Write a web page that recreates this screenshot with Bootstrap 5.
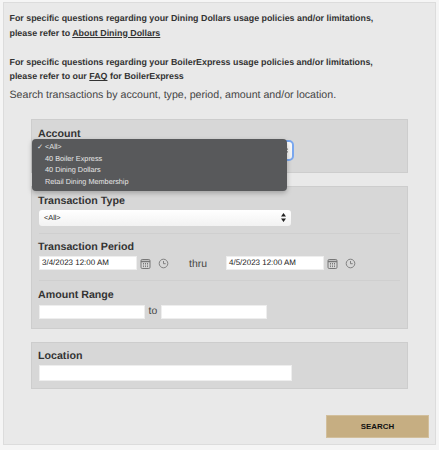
<!DOCTYPE html>
<html lang="en"><head><meta charset="utf-8"><title>Search</title>
<link href="https://cdn.jsdelivr.net/npm/bootstrap@5.3.0/dist/css/bootstrap.min.css" rel="stylesheet">
<style>
html,body{height:450px;overflow:hidden}
body{background:#f5f5f5;font-family:"Liberation Sans",Arial,sans-serif;color:#333;padding:2px 3px 0;text-rendering:geometricPrecision}
.outer-panel{background:#e9e9e9;border:1px solid #dcdcdc;height:443px;width:433px;padding:8px 6px 0 5.5px}
.note{font-size:8.87px;font-weight:700;line-height:14.6px;color:#333;margin:0}
.note a{color:#333}
.note-gap{margin-top:14.6px}
.intro{font-size:10.64px;line-height:16px;margin:3px 0 0;color:#444}
.field-box{background:#d7d7d7;border:1px solid #cdcdcd;width:377px;margin-left:21.5px;padding:0 7px}
.box-account{margin-top:16px;height:54px;padding-top:8px;position:relative}
.box-filters{margin-top:13px;height:143px;padding-top:8px}
.box-location{margin-top:13px;height:47px;padding-top:7px}
.field-label{font-size:10.67px;font-weight:700;line-height:13px;color:#333;display:block;margin:0 0 2px -1px}
.label-tight{margin-bottom:0}
.native-select{background:#fff linear-gradient(#fff,#f2f2f2);border-radius:3px;height:16px;width:252px;font-size:7.3px;color:#222;padding:0 5px}
.focused{outline:2px solid #7aa7ee;outline-offset:-1px;border-radius:4px;width:254px;height:19px}
.arrows{width:5px;height:9px;flex:none}
.divider-a{border-top:1px solid #cfcfcf;margin:7px 0}
.divider-b{border-top:1px solid #cfcfcf;margin:8px 0}
.text-field{background:#fff;border:1px solid #eee;height:14px;font-size:7.98px;line-height:12px;padding:0 2px;color:#222;flex:none}
.date-field{width:97.5px}
.range-field{width:105.5px}
.loc-field{width:253px;height:16px}
.ico{width:11px;height:11px;flex:none;color:#777;margin-top:2px}
.ico-cal{margin-left:3px}
.ico-clock{margin-left:7px}
.sep-thru{font-size:10.4px;line-height:14px;color:#444;width:57.5px;padding-left:20.5px;flex:none;margin-top:2px}
.sep-to{font-size:10.4px;color:#444;margin:0 4px}
.popup{position:absolute;left:0;top:19px;width:255px;height:52px;background:#58595b;border-radius:4px;color:#e6e6e6;font-size:7.3px;line-height:11.6px;padding:2px 0 0 13px;box-shadow:0 2px 5px rgba(0,0,0,.25);z-index:5}
.popup-item{position:relative}
.tick{position:absolute;left:-8px;top:0}
.search-btn{background:#c6ae82;border:1px solid #d2bf9c;border-radius:0;width:103px;height:23px;font-size:7.9px;font-weight:700;color:#111;padding:0;margin:26px 0 0 auto;display:block}
</style></head>
<body>
<div class="outer-panel">
  <p class="note">For specific questions regarding your Dining Dollars usage policies and/or limitations,<br>please refer to <a href="#">About Dining Dollars</a></p>
  <p class="note note-gap">For specific questions regarding your BoilerExpress usage policies and/or limitations,<br>please refer to our <a href="#">FAQ</a> for BoilerExpress</p>
  <p class="intro">Search transactions by account, type, period, amount and/or location.</p>

  <div class="field-box box-account">
    <span class="field-label label-tight">Account</span>
    <div class="native-select focused d-flex align-items-center justify-content-end">
      <svg class="arrows" viewBox="0 0 5 9"><path d="M2.5 0 5 3.5H0ZM2.5 9 0 5.5h5Z" fill="#222"/></svg></div>
    <div class="popup">
      <div class="popup-item"><span class="tick">✓</span>&lt;All&gt;</div>
      <div class="popup-item">40 Boiler Express</div>
      <div class="popup-item">40 Dining Dollars</div>
      <div class="popup-item">Retail Dining Membership</div>
    </div>
  </div>

  <div class="field-box box-filters">
    <span class="field-label">Transaction Type</span>
    <div class="native-select d-flex align-items-center justify-content-between"><span>&lt;All&gt;</span>
      <svg class="arrows" viewBox="0 0 5 9"><path d="M2.5 0 5 3.5H0ZM2.5 9 0 5.5h5Z" fill="#222"/></svg></div>
    <div class="divider-a"></div>
    <span class="field-label">Transaction Period</span>
    <div class="d-flex align-items-start">
      <div class="text-field date-field">3/4/2023 12:00 AM</div>
      <svg class="ico ico-cal" viewBox="0 0 11 11" fill="none" stroke="currentColor"><rect x="1" y="1.5" width="9" height="9" rx="1.2"/><path d="M1 3.5h9" stroke-width="1.5"/><path d="M3 5.5h5M3 7h5M3 8.6h5" stroke-dasharray="1 1"/></svg>
      <svg class="ico ico-clock" viewBox="0 0 11 11" fill="none" stroke="currentColor" stroke-width=".9"><circle cx="5.5" cy="5.5" r="4.3"/><path d="M5.5 3v2.7h2.2"/></svg>
      <span class="sep-thru">thru</span>
      <div class="text-field date-field">4/5/2023 12:00 AM</div>
      <svg class="ico ico-cal" viewBox="0 0 11 11" fill="none" stroke="currentColor"><rect x="1" y="1.5" width="9" height="9" rx="1.2"/><path d="M1 3.5h9" stroke-width="1.5"/><path d="M3 5.5h5M3 7h5M3 8.6h5" stroke-dasharray="1 1"/></svg>
      <svg class="ico ico-clock" viewBox="0 0 11 11" fill="none" stroke="currentColor" stroke-width=".9"><circle cx="5.5" cy="5.5" r="4.3"/><path d="M5.5 3v2.7h2.2"/></svg>
    </div>
    <div class="divider-b"></div>
    <span class="field-label">Amount Range</span>
    <div class="d-flex align-items-center">
      <div class="text-field range-field"></div><span class="sep-to">to</span><div class="text-field range-field"></div>
    </div>
  </div>

  <div class="field-box box-location">
    <span class="field-label">Location</span>
    <div class="text-field loc-field"></div>
  </div>

  <button type="button" class="btn search-btn">SEARCH</button>
</div>
</body></html>
